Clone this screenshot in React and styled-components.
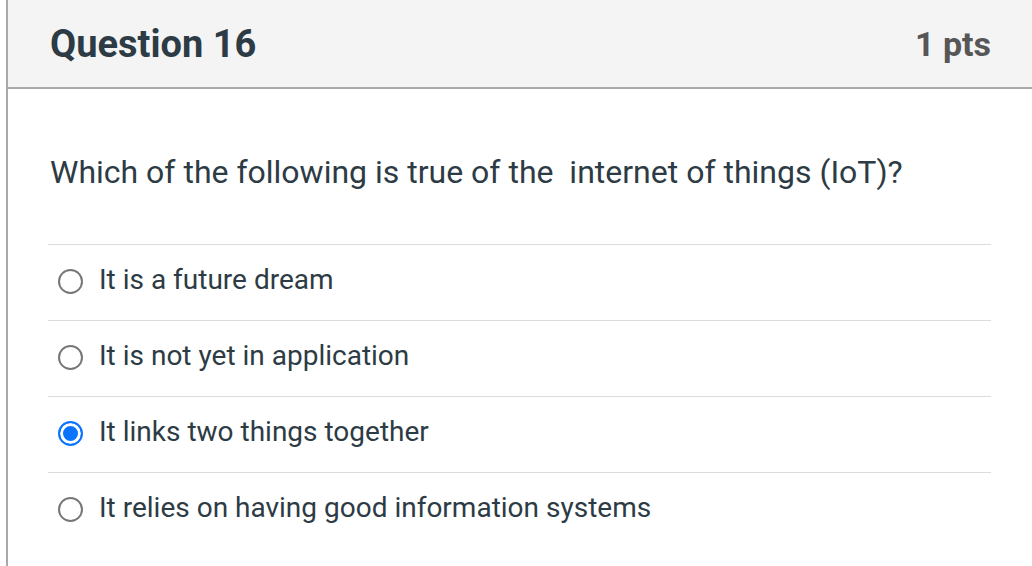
import React, { useState } from 'react';
import styled, { createGlobalStyle } from 'styled-components';

const GlobalStyle = createGlobalStyle`
  html, body {
    margin: 0;
    padding: 0;
    background: #fff;
    font-family: Roboto, "Liberation Sans", sans-serif;
  }
`;

const answers = [
  'It is a future dream',
  'It is not yet in application',
  'It links two things together',
  'It relies on having good information systems'
];

export default function App () {
  const [picked, setPicked] = useState(2);

  return (
    <>
      <GlobalStyle />
      <Page>
        <Header>
          <Title>Question 16</Title>
          <Points>1 pts</Points>
        </Header>
        <Body>
          <QuestionText>Which of the following is true of the&nbsp; internet of things (IoT)?</QuestionText>
          <AnswerList>
            {answers.map((text, i) => (
              <Answer key={i} onClick={() => setPicked(i)}>
                <Radio checked={picked === i} />
                <AnswerText>{text}</AnswerText>
              </Answer>
            ))}
          </AnswerList>
        </Body>
      </Page>
    </>
  );
}

const Page = styled.div`
  margin-left: 6px;
  border-left: 2px solid #a9a9a9;
  min-height: 566px;
  box-sizing: border-box;
`;

const Header = styled.div`
  height: 87px;
  background: #f4f4f4;
  border-bottom: 2px solid #a9a9a9;
  display: flex;
  align-items: center;
  justify-content: space-between;
  padding: 0 41px 0 42px;
`;

const Title = styled.h2`
  margin: 0;
  font-size: 38px;
  font-weight: 700;
  color: #2d3b45;
`;

const Points = styled.div`
  font-size: 34px;
  font-weight: 700;
  color: #565656;
`;

const Body = styled.div`
  padding: 0 41px 0 40px;
`;

const QuestionText = styled.p`
  margin: 0;
  padding: 64px 0 53px 2px;
  font-size: 32px;
  line-height: 38px;
  color: #2d3b45;
`;

const AnswerList = styled.div`
  display: flex;
  flex-direction: column;
`;

const Answer = styled.label`
  display: flex;
  align-items: center;
  height: 75px;
  border-top: 1px solid #dcdcdc;
  cursor: pointer;
`;

const Radio = styled.span`
  width: 25px;
  height: 25px;
  margin: 0 16px 2px 10px;
  border-radius: 50%;
  box-sizing: border-box;
  border: 2px solid ${p => (p.checked ? '#0b74ff' : '#777')};
  background: ${p => (p.checked ? '#0b74ff' : '#fff')};
  box-shadow: ${p => (p.checked ? 'inset 0 0 0 3px #fff' : 'none')};
  flex-shrink: 0;
`;

const AnswerText = styled.span`
  font-size: 28px;
  line-height: 34px;
  margin-bottom: 5px;
  color: #2d3b45;
`;
